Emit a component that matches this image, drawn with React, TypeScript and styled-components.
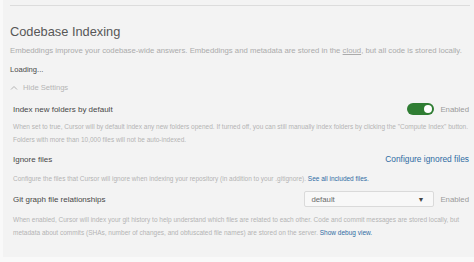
import styled, { createGlobalStyle } from 'styled-components';

const GlobalStyle = createGlobalStyle`
    html, body {
        margin: 0;
        padding: 0;
        background: #f9f9f9;
    }
    body {
        font-family: 'Liberation Sans', Arial, sans-serif;
    }
`;

const Page = styled.div`
    width: 471px;
    height: 257px;
    margin-left: 3px;
    box-sizing: border-box;
    padding: 5px 4px 4px 7px;
    background: #f3f3f3;
    overflow: hidden;
`;

const Divider = styled.div`
    height: 1px;
    background: #dcdcdc;
`;

const Title = styled.h1`
    margin: 17px 0 0;
    font-size: 12.8px;
    font-weight: 400;
    color: #575757;
    line-height: 18px;
`;

const Description = styled.p`
    margin: 4px 0 0;
    font-size: 7.75px;
    color: #ababab;
    line-height: 11px;
    white-space: nowrap;
`;

const Underlined = styled.span`
    text-decoration: underline;
`;

const Loading = styled.div`
    margin-top: 9px;
    font-size: 7.6px;
    color: #4a4a4a;
    line-height: 10px;
`;

const Toggle = styled.div`
    margin-top: 8px;
    display: flex;
    align-items: center;
    gap: 5px;
    font-size: 7.6px;
    color: #b5b5b5;
    line-height: 10px;
`;

const Settings = styled.div`
    display: flex;
    flex-direction: column;
    padding-left: 3px;
    padding-right: 1px;
`;

const Row = styled.div<{ $top: number }>`
    display: flex;
    align-items: center;
    justify-content: space-between;
    margin-top: ${({ $top }) => $top}px;
    height: 14px;
`;

const Label = styled.div`
    font-size: 8px;
    color: #474747;
`;

const Control = styled.div`
    display: flex;
    align-items: center;
    gap: 6px;
`;

const Status = styled.span`
    font-size: 7.8px;
    color: #9a9a9a;
`;

const Switch = styled.div`
    position: relative;
    width: 27px;
    height: 12px;
    border-radius: 6px;
    background: #2f7d33;
`;

const Knob = styled.div`
    position: absolute;
    top: 2px;
    right: 2px;
    width: 8px;
    height: 8px;
    border-radius: 50%;
    background: #fff;
`;

const Link = styled.span`
    color: #2f6ca3;
`;

const LinkRight = styled.span`
    font-size: 8.4px;
    color: #2f6ca3;
`;

const Help = styled.div<{ $top: number }>`
    margin-top: ${({ $top }) => $top}px;
    font-size: 6.5px;
    color: #b4b4b4;
    line-height: 13px;
    white-space: nowrap;
`;

const Select = styled.div`
    width: 130px;
    height: 16px;
    box-sizing: border-box;
    display: flex;
    align-items: center;
    justify-content: space-between;
    padding: 0 9px 0 6px;
    background: #f8f8f8;
    border: 1px solid #dadada;
    border-radius: 2px;
    font-size: 7.8px;
    color: #6a6a6a;
`;

const Caret = styled.span`
    font-size: 7px;
    color: #444;
`;

function Chevron() {
    return (
        <svg width="8" height="6" viewBox="0 0 8 6">
            <path d="M1 4.5 L4 1.5 L7 4.5" fill="none" stroke="#b5b5b5" strokeWidth="1" />
        </svg>
    );
}

export default function App() {
    return (
        <Page>
            <GlobalStyle />
            <Divider />
            <Title>Codebase Indexing</Title>
            <Description>
                Embeddings improve your codebase-wide answers. Embeddings and metadata are stored in the{' '}
                <Underlined>cloud</Underlined>, but all code is stored locally.
            </Description>
            <Loading>Loading...</Loading>
            <Toggle>
                <Chevron />
                Hide Settings
            </Toggle>
            <Settings>
                <Row $top={9}>
                    <Label>Index new folders by default</Label>
                    <Control>
                        <Switch>
                            <Knob />
                        </Switch>
                        <Status>Enabled</Status>
                    </Control>
                </Row>
                <Help $top={4}>
                    When set to true, Cursor will by default index any new folders opened. If turned off, you can still manually index folders by clicking the "Compute Index" button.
                    <br />
                    Folders with more than 10,000 files will not be auto-indexed.
                </Help>
                <Row $top={6}>
                    <Label>Ignore files</Label>
                    <LinkRight>Configure ignored files</LinkRight>
                </Row>
                <Help $top={6}>
                    Configure the files that Cursor will ignore when indexing your repository (in addition to your .gitignore).{' '}
                    <Link>See all included files.</Link>
                </Help>
                <Row $top={7}>
                    <Label>Git graph file relationships</Label>
                    <Control>
                        <Select>
                            default
                            <Caret>▼</Caret>
                        </Select>
                        <Status>Enabled</Status>
                    </Control>
                </Row>
                <Help $top={7}>
                    When enabled, Cursor will index your git history to help understand which files are related to each other. Code and commit messages are stored locally, but
                    <br />
                    metadata about commits (SHAs, number of changes, and obfuscated file names) are stored on the server. <Link>Show debug view.</Link>
                </Help>
            </Settings>
        </Page>
    );
}
